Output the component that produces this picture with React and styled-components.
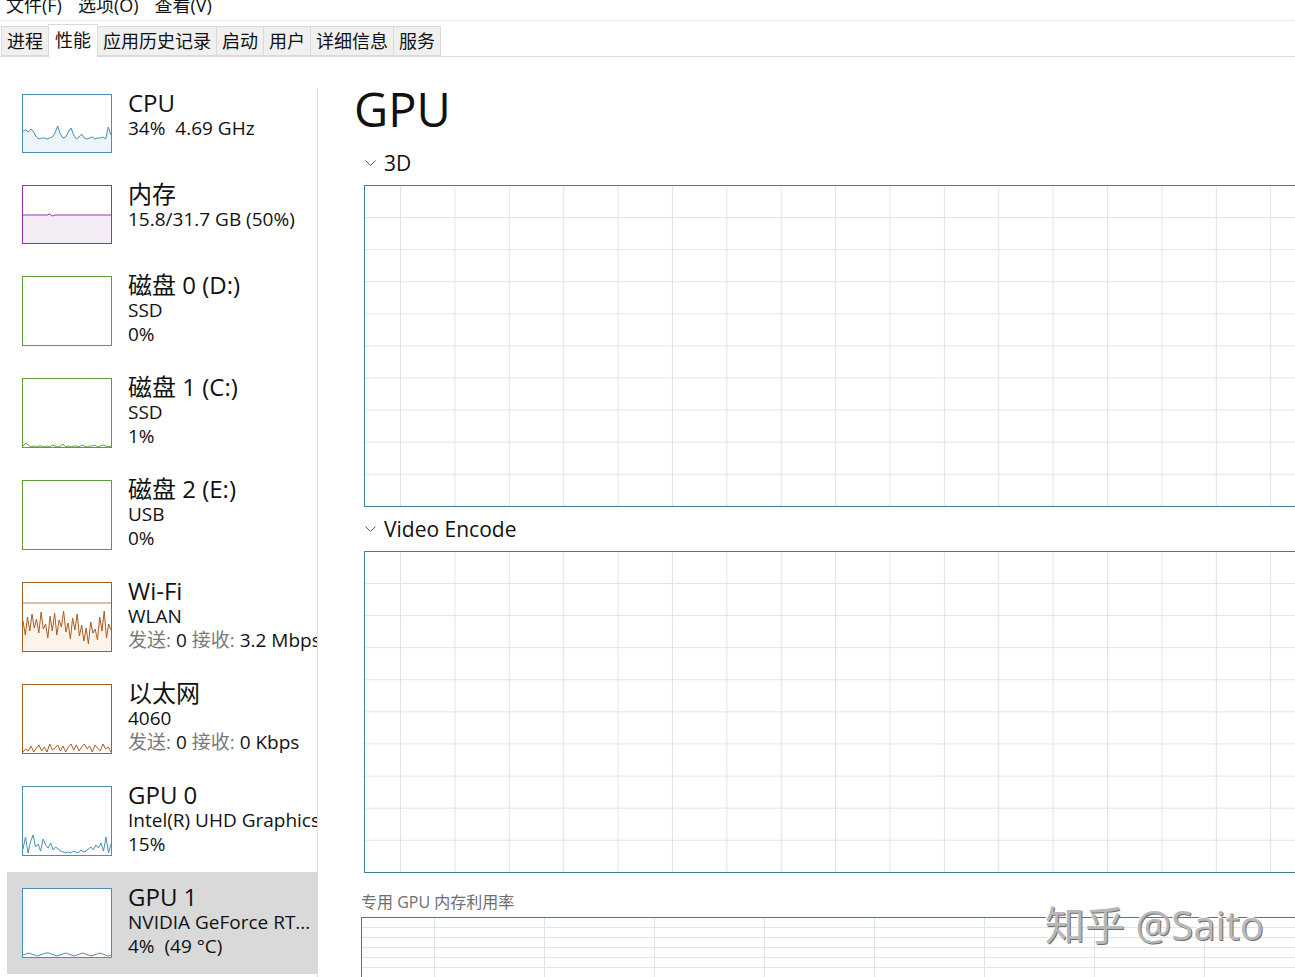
import React from "react";
import styled, { createGlobalStyle } from "styled-components";

const UI_FONT = `"Open Sans", "Noto Sans CJK SC", sans-serif`;

const GlobalStyle = createGlobalStyle`
  html, body {
    margin: 0;
    padding: 0;
    background: #ffffff;
    overflow: hidden;
  }
  body {
    font-family: ${UI_FONT};
    color: #111;
  }
`;

const colors = {
  cpu: { line: "#4a8fb3", fill: "#eef5fa" },
  mem: { line: "#9430b2", fill: "#f4edf6" },
  disk: { line: "#619c36", fill: "#f3f8ee" },
  net: { line: "#a95e22", fill: "#fdf3ea" },
};

// sparkline data (y values inside the thumbnail, 0 = top)
const cpuData = [36, 35, 37, 34, 37, 42, 44, 43, 43, 44, 43, 42, 38, 31, 39, 43, 42, 37, 33, 40, 44, 42, 39, 43, 44, 43, 42, 44, 43, 43, 42, 44, 32, 40];
const memData = [29, 29, 29, 29, 29, 29, 29, 29, 29, 29, 28, 30, 29, 29, 29, 29, 29, 29, 29, 29, 29, 29, 29, 29, 29, 29, 29, 29, 29, 29, 29, 29, 29, 29];
const disk1Data = [67, 64, 66, 68, 67, 68, 67, 67, 68, 67, 68, 66, 67, 68, 67, 65, 68, 67, 68, 67, 67, 68, 66, 67, 68, 67, 67, 66, 68, 67, 66, 67, 68, 67];
const wifiData = [38, 52, 34, 48, 31, 45, 36, 50, 29, 46, 41, 55, 33, 48, 30, 52, 37, 44, 28, 49, 40, 56, 35, 47, 31, 53, 42, 58, 45, 61, 39, 50, 46, 57, 34, 48, 28, 55, 41, 47];
const ethData = [67, 64, 66, 61, 67, 63, 60, 66, 62, 67, 59, 65, 63, 60, 66, 61, 67, 62, 59, 65, 60, 66, 62, 59, 64, 61, 67, 60, 63, 66, 59, 64, 62, 67];
const gpu0Data = [62, 50, 66, 55, 48, 60, 57, 64, 52, 58, 61, 56, 63, 60, 62, 64, 65, 66, 65, 66, 64, 65, 66, 63, 65, 64, 62, 60, 63, 58, 61, 56, 64, 50, 66, 57];
const gpu1Data = [66, 65, 64, 65, 66, 67, 66, 65, 64, 64, 65, 66, 67, 66, 65, 64, 65, 66, 67, 66, 65, 64, 65, 66, 67, 66, 65, 64, 65, 66, 67, 66];

const Window = styled.div`
  position: relative;
  width: 1295px;
  height: 977px;
  overflow: hidden;
  background: #fff;
`;

const MenuBar = styled.div`
  height: 20px;
  overflow: hidden;
  border-bottom: 1px solid #ededed;
  display: flex;
  gap: 16px;
  padding-left: 6px;
`;

const MenuItem = styled.span`
  font-size: 18px;
  line-height: 20px;
  margin-top: -5px;
  color: #111;
  white-space: nowrap;
`;

const TabStrip = styled.div`
  display: flex;
  align-items: flex-end;
  height: 35px;
  padding-left: 2px;
  border-bottom: 1px solid #dadada;
`;

const Tab = styled.div`
  font-size: 18px;
  line-height: ${(p) => (p.$active ? "31px" : "28px")};
  height: ${(p) => (p.$active ? "33px" : "30px")};
  box-sizing: border-box;
  padding: ${(p) => (p.$active ? "0 6px" : "0 5px")};
  margin-left: -1px;
  margin-bottom: ${(p) => (p.$active ? "-1px" : "0")};
  border: 1px solid #dadada;
  border-bottom: ${(p) => (p.$active ? "none" : "1px solid #dadada")};
  background: ${(p) => (p.$active ? "#ffffff" : "#f0f0f0")};
  color: #111;
  white-space: nowrap;
  position: relative;
  z-index: ${(p) => (p.$active ? 2 : 1)};
`;

const Body = styled.div`
  display: flex;
  padding-left: 7px;
`;

const Sidebar = styled.div`
  position: relative;
  width: 311px;
  flex-shrink: 0;
  padding-top: 21px;
  overflow: hidden;

  &::after {
    content: "";
    position: absolute;
    right: 0;
    top: 31px;
    bottom: 0;
    width: 1px;
    background: #dcdcdc;
  }
`;

const Item = styled.div`
  display: flex;
  gap: 16px;
  padding: 16px 0 16px 15px;
  background: ${(p) => (p.$selected ? "#d9d9d9" : "transparent")};
`;

const Thumb = styled.div`
  width: 90px;
  height: ${(p) => p.$h}px;
  flex-shrink: 0;
  box-sizing: border-box;
  border: 1px solid ${(p) => p.$color};
  background: #fff;

  svg {
    display: block;
    width: 100%;
    height: 100%;
  }
`;

const ItemText = styled.div`
  margin-top: -4px;
  white-space: nowrap;
`;

const ItemTitle = styled.div`
  font-size: 24px;
  line-height: 26px;
  color: #111;
`;

const ItemLine = styled.div`
  font-size: 19px;
  line-height: 24px;
  color: #111;
`;

const Dim = styled.span`
  color: #7a7a7a;
`;

const Main = styled.div`
  flex: 1;
  min-width: 0;
  padding: 28px 0 0 39px;
  overflow: hidden;
`;

const PageTitle = styled.h1`
  margin: 0 0 0 -3px;
  font-weight: 400;
  font-size: 47px;
  line-height: 48px;
  color: #111;
`;

const SectionHead = styled.div`
  display: flex;
  align-items: center;
  gap: 8px;
  margin: ${(p) => p.$top}px 0 8px 8px;
  height: 28px;
  font-size: 21px;
  color: #111;

  svg {
    width: 11px;
    height: 7px;
  }
`;

const Chart = styled.div`
  box-sizing: border-box;
  width: 960px;
  height: ${(p) => p.$h}px;
  margin-left: ${(p) => p.$left}px;
  border: 1px solid #407f9a;
  background-color: #fff;
  background-image:
    linear-gradient(to right, #dde5e9 1px, transparent 1px),
    linear-gradient(to bottom, #dde5e9 1px, transparent 1px);
  background-size: ${(p) => p.$cell};
  background-position: ${(p) => p.$offset};
`;

const SmallLabel = styled.div`
  margin: 19px 0 5px 4px;
  font-size: 16px;
  line-height: 20px;
  color: #6e6e6e;
`;

const Watermark = styled.div`
  position: absolute;
  left: 1045px;
  top: 902px;
  font-size: 40px;
  line-height: 46px;
  font-family: ${UI_FONT};
  color: #b8b8b8;
  text-shadow: 1px 1px 0 #707070, -1px -1px 0 #ffffff;
  white-space: nowrap;
  pointer-events: none;
`;

function Spark({ data, w = 88, h, color, fill, topLine }) {
  const step = w / (data.length - 1);
  const pts = data.map((y, i) => `${(i * step).toFixed(1)},${y}`).join(" ");
  return (
    <svg viewBox={`0 0 ${w} ${h}`} preserveAspectRatio="none">
      {fill && <polygon points={`0,${h} ${pts} ${w},${h}`} fill={fill} />}
      {topLine != null && <line x1="0" y1={topLine} x2={w} y2={topLine} stroke={color} strokeWidth="0.8" />}
      {data.length > 0 && <polyline points={pts} fill="none" stroke={color} strokeWidth="1" />}
    </svg>
  );
}

const Chevron = () => (
  <svg viewBox="0 0 11 7">
    <polyline points="0.5,0.5 5.5,5.5 10.5,0.5" fill="none" stroke="#555" strokeWidth="1" />
  </svg>
);

const items = [
  { key: "cpu", h: 59, c: colors.cpu, data: cpuData, fill: true, title: "CPU", lines: ["34%\u00a0 4.69 GHz"] },
  { key: "mem", h: 59, c: colors.mem, data: memData, fill: true, title: "内存", lines: ["15.8/31.7 GB (50%)"] },
  { key: "d0", h: 70, c: colors.disk, data: [], title: "磁盘 0 (D:)", lines: ["SSD", "0%"] },
  { key: "d1", h: 70, c: colors.disk, data: disk1Data, title: "磁盘 1 (C:)", lines: ["SSD", "1%"] },
  { key: "d2", h: 70, c: colors.disk, data: [], title: "磁盘 2 (E:)", lines: ["USB", "0%"] },
  { key: "wifi", h: 70, c: colors.net, data: wifiData, fill: true, topLine: 20, title: "Wi-Fi", lines: ["WLAN", "net:3.2 Mbps"] },
  { key: "eth", h: 70, c: colors.net, data: ethData, title: "以太网", lines: ["4060", "net:0 Kbps"] },
  { key: "g0", h: 70, c: colors.cpu, data: gpu0Data, title: "GPU 0", lines: ["Intel(R) UHD Graphics", "15%"] },
  { key: "g1", h: 70, c: colors.cpu, data: gpu1Data, title: "GPU 1", lines: ["NVIDIA GeForce RT...", "4%\u00a0 (49 °C)"], selected: true },
];

function renderLine(text) {
  if (text.startsWith("net:")) {
    return (
      <>
        <Dim>发送:</Dim> 0 <Dim>接收:</Dim> {text.slice(4)}
      </>
    );
  }
  return text;
}

const tabs = ["进程", "性能", "应用历史记录", "启动", "用户", "详细信息", "服务"];

export default function App() {
  return (
    <>
      <GlobalStyle />
      <Window>
        <MenuBar>
          <MenuItem>文件(F)</MenuItem>
          <MenuItem>选项(O)</MenuItem>
          <MenuItem>查看(V)</MenuItem>
        </MenuBar>
        <TabStrip>
          {tabs.map((t) => (
            <Tab key={t} $active={t === "性能"}>{t}</Tab>
          ))}
        </TabStrip>
        <Body>
          <Sidebar>
            {items.map((it) => (
              <Item key={it.key} $selected={it.selected}>
                <Thumb $h={it.h} $color={it.c.line}>
                  <Spark
                    data={it.data}
                    h={it.h - 2}
                    color={it.c.line}
                    fill={it.fill ? it.c.fill : null}
                    topLine={it.topLine}
                  />
                </Thumb>
                <ItemText>
                  <ItemTitle>{it.title}</ItemTitle>
                  {it.lines.map((l, i) => (
                    <ItemLine key={i}>{renderLine(l)}</ItemLine>
                  ))}
                </ItemText>
              </Item>
            ))}
          </Sidebar>
          <Main>
            <PageTitle>GPU</PageTitle>
            <SectionHead $top={16}>
              <Chevron />
              3D
            </SectionHead>
            <Chart $h={322} $left={7} $cell="54.4px 32.1px" $offset="35px 31px" />
            <SectionHead $top={8}>
              <Chevron />
              Video Encode
            </SectionHead>
            <Chart $h={322} $left={7} $cell="54.4px 32.1px" $offset="35px 31px" />
            <SmallLabel>专用 GPU 内存利用率</SmallLabel>
            <Chart $h={110} $left={4} $cell="110px 10px" $offset="72px 9px" />
          </Main>
        </Body>
        <Watermark>知乎 @Saito</Watermark>
      </Window>
    </>
  );
}
